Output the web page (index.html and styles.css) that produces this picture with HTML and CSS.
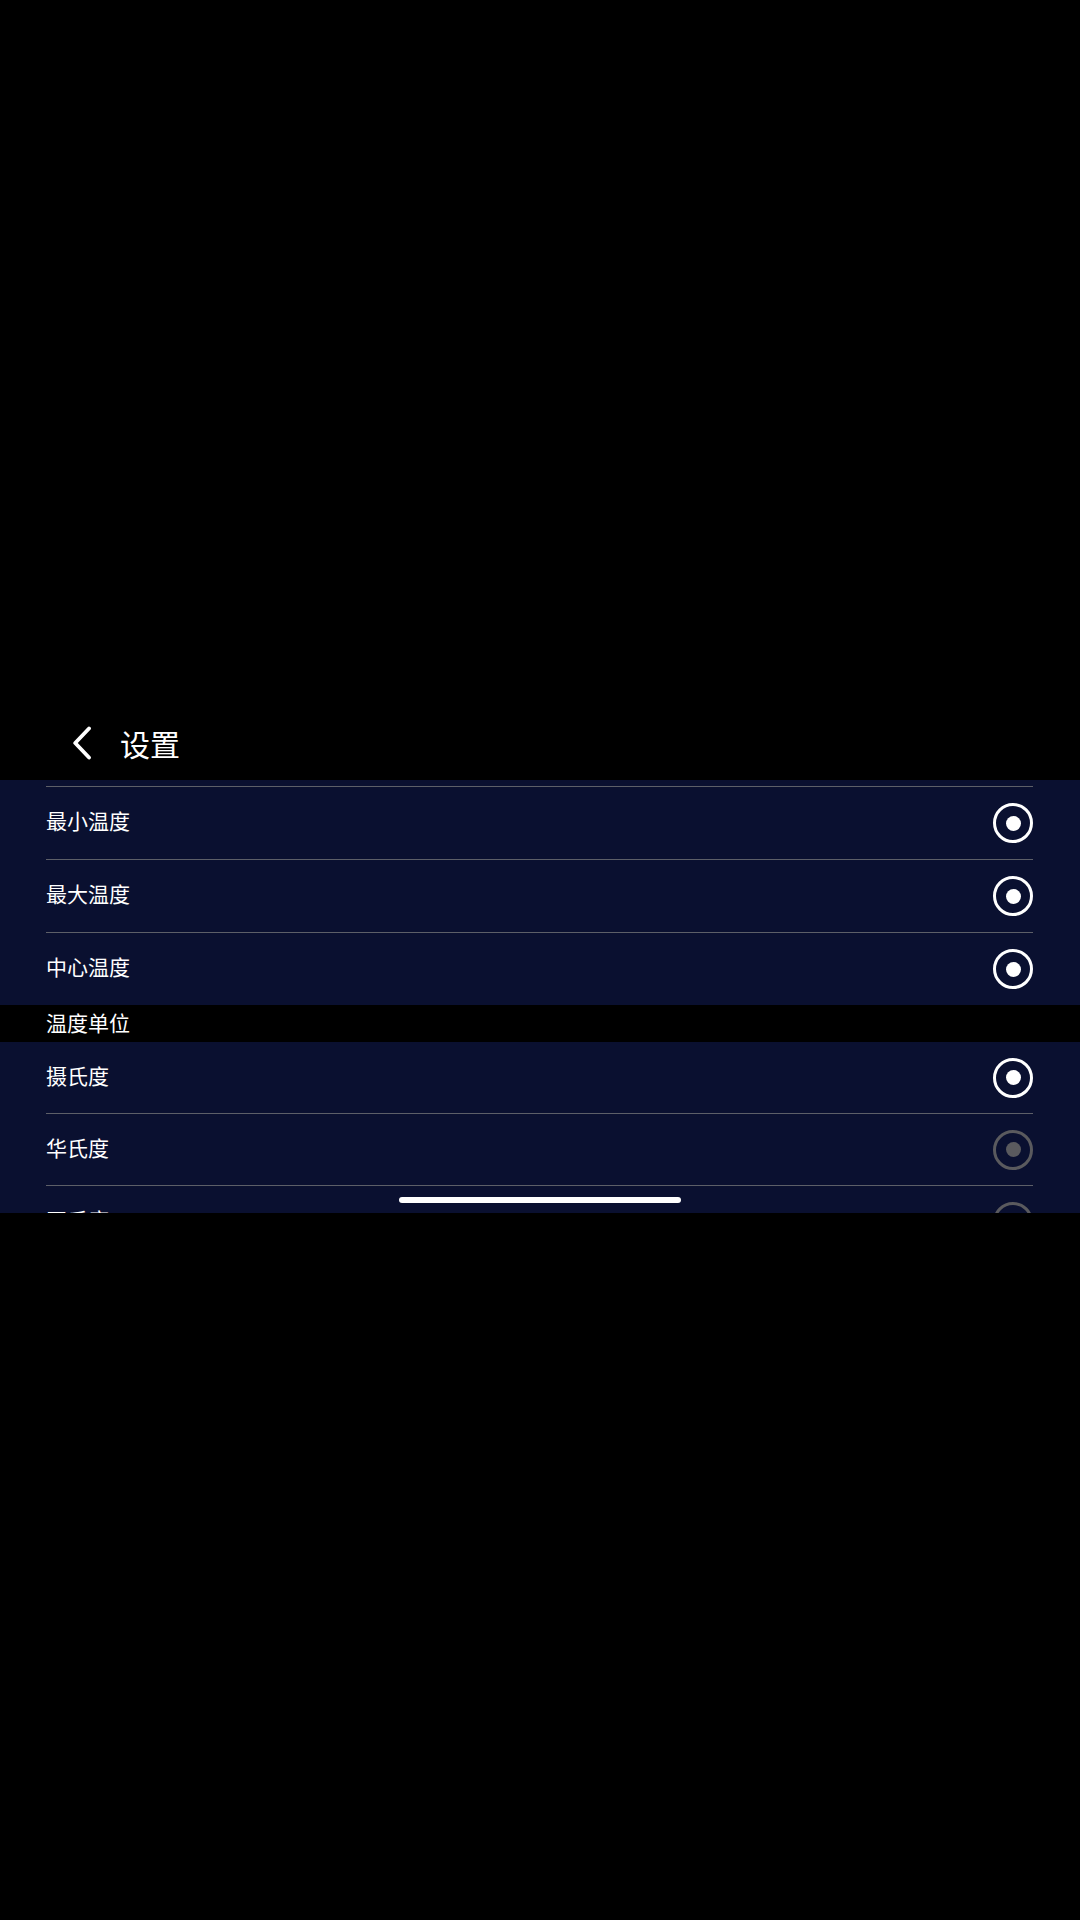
FILE: index.html
```html
<!DOCTYPE html>
<html lang="zh">
<head>
<meta charset="utf-8">
<title>设置</title>
<link rel="stylesheet" href="styles.css">
</head>
<body>
<div class="screen">
  <div class="preview"></div>
  <header class="header">
    <svg class="back" viewBox="0 0 20 34" width="20" height="34" aria-hidden="true">
      <polyline points="17,2.5 3.2,17 17,31.5" fill="none" stroke="#ffffff" stroke-width="3.8" stroke-linecap="round" stroke-linejoin="round"/>
    </svg>
    <h1 class="title">设置</h1>
  </header>
  <div class="scroller">
    <div class="group group-first">
      <div class="row row-lined"><span class="label">最小温度</span><span class="radio on"></span></div>
      <div class="row"><span class="label">最大温度</span><span class="radio on"></span></div>
      <div class="row"><span class="label">中心温度</span><span class="radio on"></span></div>
    </div>
    <div class="section-title"><span class="section-text">温度单位</span></div>
    <div class="group group-units">
      <div class="row"><span class="label">摄氏度</span><span class="radio on"></span></div>
      <div class="row"><span class="label">华氏度</span><span class="radio off"></span></div>
      <div class="row"><span class="label">开氏度</span><span class="radio off"></span></div>
    </div>
  </div>
  <div class="home-indicator"></div>
</div>
</body>
</html>
```
FILE: styles.css
```css
html, body {
  margin: 0;
  padding: 0;
  background: #000000;
}

body {
  width: 1080px;
  height: 1920px;
  overflow: hidden;
  font-family: "Noto Sans CJK SC", "Noto Sans", sans-serif;
  color: #ffffff;
}

.screen {
  position: relative;
  width: 1080px;
  height: 1920px;
  display: flex;
  flex-direction: column;
}

.preview {
  height: 706px;
  flex: none;
}

.header {
  height: 74px;
  flex: none;
  display: flex;
  align-items: center;
  padding-left: 72px;
  gap: 28px;
}

.back {
  display: block;
  flex: none;
}

.title {
  margin: 0;
  font-size: 30px;
  font-weight: 400;
  line-height: 1;
  color: #ffffff;
}

.scroller {
  height: 433px;
  flex: none;
  overflow: hidden;
}

.group {
  background: #0a1030;
  padding: 0 47px 0 46px;
}

.group-first {
  padding-top: 6px;
}

.row {
  height: 72px;
  display: flex;
  align-items: center;
  justify-content: space-between;
}

.group-units .row {
  height: 71px;
}

.row + .row,
.row-lined {
  border-top: 1px solid #5d5f68;
}

.label {
  font-size: 21px;
  line-height: 1;
  color: #ffffff;
  margin-bottom: 5px;
}

.radio {
  position: relative;
  width: 40px;
  height: 40px;
  box-sizing: border-box;
  border-radius: 50%;
  border: 3px solid #ffffff;
  flex: none;
}

.radio::after {
  content: "";
  position: absolute;
  left: 50%;
  top: 50%;
  width: 15px;
  height: 15px;
  margin: -7.5px 0 0 -7.5px;
  border-radius: 50%;
  background: #ffffff;
}

.radio.off {
  border-color: #5a5a5e;
}

.radio.off::after {
  background: #5a5a5e;
}

.section-title {
  height: 37px;
  display: flex;
  align-items: center;
  padding-left: 46px;
  background: #000000;
}

.section-text {
  font-size: 21px;
  line-height: 1;
  margin-bottom: 3px;
}

.home-indicator {
  position: absolute;
  left: 399px;
  top: 1197px;
  width: 282px;
  height: 6px;
  border-radius: 3px;
  background: #ffffff;
}
```
